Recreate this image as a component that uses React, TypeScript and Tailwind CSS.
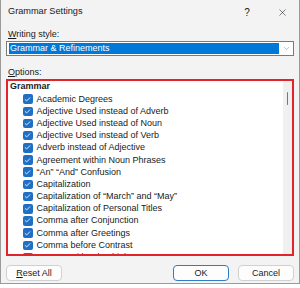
import { Check, ChevronDown, X } from "lucide-react";

const items = [
  "Academic Degrees",
  "Adjective Used instead of Adverb",
  "Adjective Used instead of Noun",
  "Adjective Used instead of Verb",
  "Adverb instead of Adjective",
  "Agreement within Noun Phrases",
  "\u201cAn\u201d \u201cAnd\u201d Confusion",
  "Capitalization",
  "Capitalization of \u201cMarch\u201d and \u201cMay\u201d",
  "Capitalization of Personal Titles",
  "Comma after Conjunction",
  "Comma after Greetings",
  "Comma before Contrast",
  "Comma with Adverbials",
];

function Box() {
  return (
    <span className="flex h-[9.5px] w-[9.5px] shrink-0 items-center justify-center rounded-[2px] bg-[#1f6fc5]">
      <Check size={7} strokeWidth={3} className="text-white" />
    </span>
  );
}

export default function App() {
  return (
    <div
      className="h-[288px] w-[300px] overflow-hidden bg-white text-[9px] text-[#1a1a1a]"
      style={{ fontFamily: '"Liberation Sans", Arial, sans-serif' }}
    >
      <div className="flex h-[284px] flex-col border border-t-0 border-[#9a9a9a] bg-[#f3f3f3]">
        {/* title bar */}
        <div className="flex h-[24px] items-center pl-[7px] text-[9.2px]">
          <span className="flex-1">Grammar Settings</span>
          <span className="w-[36px] text-center text-[10px]">?</span>
          <span className="flex w-[34px] justify-center">
            <X size={11} strokeWidth={1.2} />
          </span>
        </div>

        <div className="flex flex-1 flex-col px-[5px]">
          <div className="mt-[4px] h-[12px] pl-[2px] leading-[12px]">
            <span className="underline">W</span>riting style:
          </div>
          <div className="mt-[1px] flex h-[15px] items-center border border-[#7a7a7a] bg-white pl-[2px]">
            <div className="flex h-[11px] flex-1 items-center bg-[#0078d7] pl-[1px] text-white">
              Grammar &amp; Refinements
            </div>
            <span className="flex w-[14px] justify-center text-[#888]">
              <ChevronDown size={9} strokeWidth={1.5} />
            </span>
          </div>

          <div className="mt-[10px] h-[12px] pl-[2px] leading-[12px]">
            <span className="underline">O</span>ptions:
          </div>

          <div className="mt-[1px] flex h-[177px] border-2 border-[#e0242c]">
            <div className="flex-1 overflow-hidden bg-white pl-[2px]">
              <div className="flex h-[12px] items-center font-bold">Grammar</div>
              {items.map((t) => (
                <div key={t} className="flex h-[12.2px] items-center gap-[4px] pl-[13px]">
                  <Box />
                  <span className="whitespace-nowrap leading-none">{t}</span>
                </div>
              ))}
            </div>
            <div className="w-[9px] bg-[#f0f0f0] pt-[11px]">
              <div className="mx-auto h-[13px] w-[1.5px] rounded bg-[#777]" />
            </div>
          </div>

          <div className="mt-[9px] flex items-center">
            <button className="h-[16px] w-[56px] rounded-[4px] border border-[#d0d0d0] bg-[#fdfdfd] leading-none">
              <span className="underline">R</span>eset All
            </button>
            <div className="flex-1" />
            <button className="h-[16px] w-[56px] rounded-[4px] border border-[#2f7bc4] bg-[#fdfdfd] leading-none">
              OK
            </button>
            <button className="ml-[9px] h-[16px] w-[56px] rounded-[4px] border border-[#d0d0d0] bg-[#fdfdfd] leading-none">
              Cancel
            </button>
          </div>
        </div>
      </div>
    </div>
  );
}
